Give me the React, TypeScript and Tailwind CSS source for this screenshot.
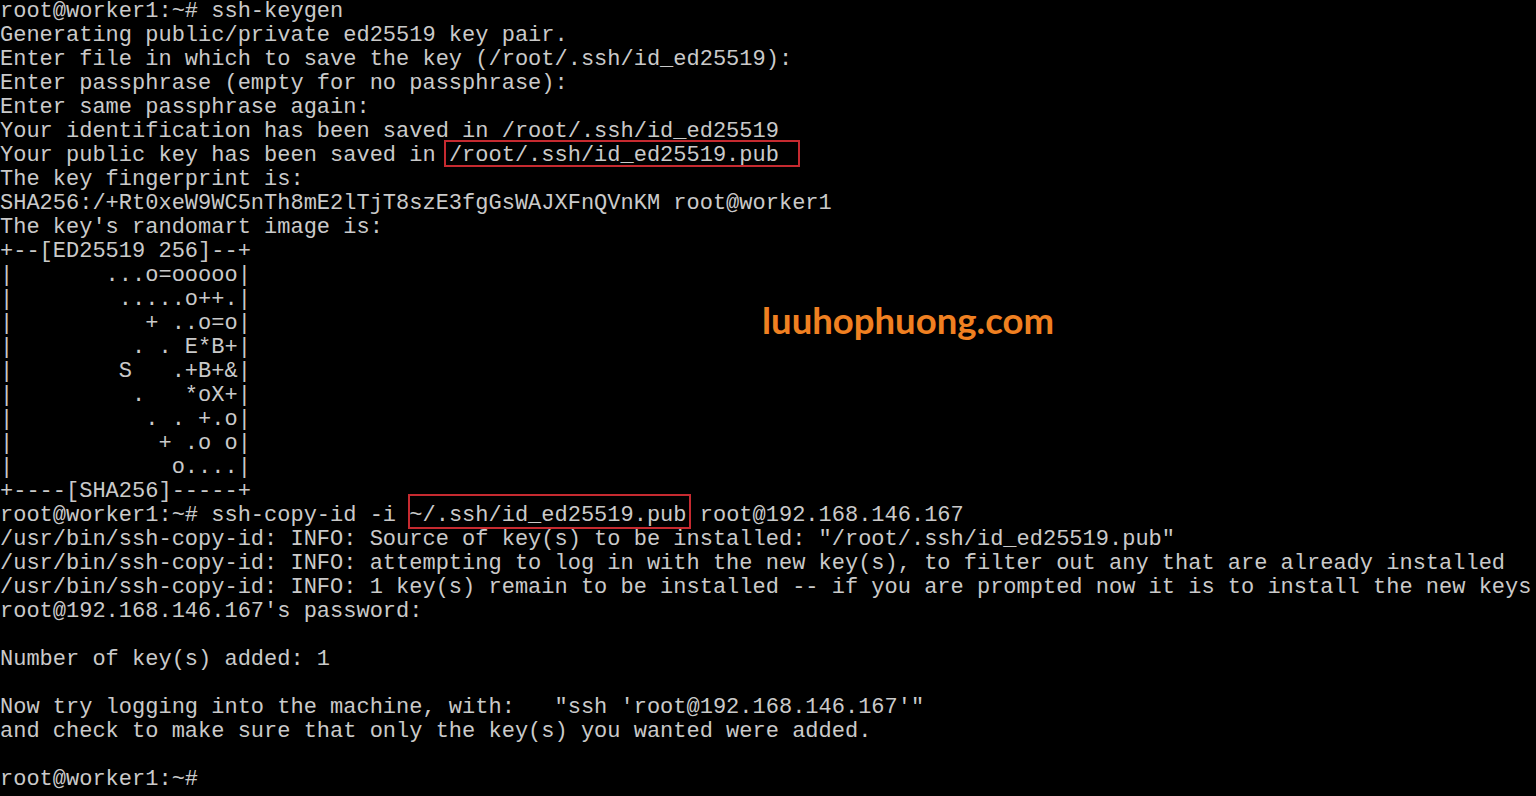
import React from "react";

const before: string[] = [
  "root@worker1:~# ssh-keygen",
  "Generating public/private ed25519 key pair.",
  "Enter file in which to save the key (/root/.ssh/id_ed25519):",
  "Enter passphrase (empty for no passphrase):",
  "Enter same passphrase again:",
  "Your identification has been saved in /root/.ssh/id_ed25519",
];

const middle: string[] = [
  "The key fingerprint is:",
  "SHA256:/+Rt0xeW9WC5nTh8mE2lTjT8szE3fgGsWAJXFnQVnKM root@worker1",
  "The key's randomart image is:",
  "+--[ED25519 256]--+",
  "|       ...o=ooooo|",
  "|        .....o++.|",
  "|          + ..o=o|",
  "|         . . E*B+|",
  "|        S   .+B+&|",
  "|         .   *oX+|",
  "|          . . +.o|",
  "|           + .o o|",
  "|            o....|",
  "+----[SHA256]-----+",
];

const after: string[] = [
  '/usr/bin/ssh-copy-id: INFO: Source of key(s) to be installed: "/root/.ssh/id_ed25519.pub"',
  "/usr/bin/ssh-copy-id: INFO: attempting to log in with the new key(s), to filter out any that are already installed",
  "/usr/bin/ssh-copy-id: INFO: 1 key(s) remain to be installed -- if you are prompted now it is to install the new keys",
  "root@192.168.146.167's password:",
  "",
  "Number of key(s) added: 1",
  "",
  "Now try logging into the machine, with:   \"ssh 'root@192.168.146.167'\"",
  "and check to make sure that only the key(s) you wanted were added.",
  "",
  "root@worker1:~#",
];

function Line({ text }: { text: string }) {
  return <div className="h-[24px] whitespace-pre">{text || " "}</div>;
}

export default function App() {
  return (
    <div className="relative h-[796px] w-[1536px] overflow-hidden bg-black">
      <div className="flex flex-col font-['Liberation_Mono',monospace] text-[22px] leading-[24px] text-[#cacaca]">
        {before.map((t, i) => (
          <Line key={"b" + i} text={t} />
        ))}
        <div className="h-[24px] whitespace-pre">
          {"Your public key has been saved in "}
          <span className="relative">
            /root/.ssh/id_ed25519.pub
            <span className="absolute -left-[5px] -right-[21px] -top-[3px] bottom-[1px] border-2 border-[#c62a30]" />
          </span>
        </div>
        {middle.map((t, i) => (
          <Line key={"m" + i} text={t} />
        ))}
        <div className="h-[24px] whitespace-pre">
          {"root@worker1:~# ssh-copy-id -i "}
          <span className="relative">
            ~/.ssh/id_ed25519.pub
            <span className="absolute -left-[1px] -right-[4px] -top-[9px] bottom-[-1px] border-2 border-[#c62a30]" />
          </span>
          {" root@192.168.146.167"}
        </div>
        {after.map((t, i) => (
          <Line key={"a" + i} text={t} />
        ))}
      </div>
      <div className="absolute left-[762px] top-[296px] font-['Lato',sans-serif] text-[36.5px] font-bold leading-[48px] text-[#f08021]">
        luuhophuong.com
      </div>
    </div>
  );
}
